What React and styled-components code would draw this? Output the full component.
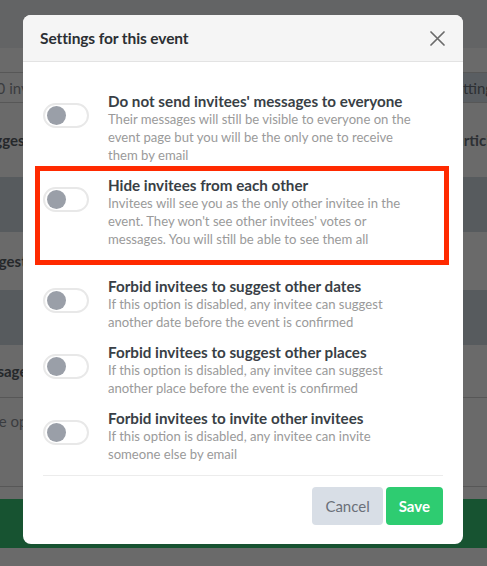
import React from "react";
import styled, { createGlobalStyle } from "styled-components";

const Global = createGlobalStyle`
  html, body { margin: 0; padding: 0; }
  body {
    width: 487px;
    height: 566px;
    overflow: hidden;
    background: #666666;
    font-family: Lato, "Liberation Sans", sans-serif;
  }
`;

const Stage = styled.div`
  position: relative;
  width: 487px;
  height: 566px;
  overflow: hidden;
`;

/* ---------- dimmed page behind the dialog ---------- */
const Backdrop = styled.div`
  display: flex;
  flex-direction: column;
  width: 100%;
  height: 100%;
  background: #6a6a6a;
`;

const TopBar = styled.div`
  height: 48px;
  background: #636465;
`;

const BgRow = styled.div`
  display: flex;
  align-items: ${(p) => p.$align || "center"};
  justify-content: space-between;
  height: ${(p) => p.$h}px;
  box-sizing: border-box;
  background: ${(p) => (p.$dark ? "#575b5e" : "transparent")};
  border-bottom: ${(p) => (p.$line ? "1px solid #575757" : "none")};
  padding-top: ${(p) => p.$pt || 0}px;
  font-size: 15px;
  color: #2f3134;
  white-space: nowrap;
`;

const BgLeft = styled.div`
  width: ${(p) => p.$w || 60}px;
  overflow: hidden;
  display: flex;
  justify-content: flex-end;
  font-weight: ${(p) => (p.$bold ? 700 : 400)};
  color: ${(p) => (p.$bold ? "#25282b" : "#3a3c3f")};
`;

const BgRight = styled.div`
  display: flex;
  align-items: center;
  height: 100%;
  padding-left: 16px;
  width: 40px;
  overflow: hidden;
  background: ${(p) => (p.$box ? "#5a5e62" : "transparent")};
  font-weight: ${(p) => (p.$bold ? 700 : 400)};
  color: #2c2f33;
`;

const Green = styled.div`
  height: 49px;
  margin-top: 12px;
  background: #175331;
`;

/* ---------- dialog ---------- */
const Dialog = styled.div`
  position: absolute;
  left: 23px;
  top: 15px;
  width: 440px;
  background: #ffffff;
  border-radius: 8px;
  overflow: hidden;
  display: flex;
  flex-direction: column;
`;

const Header = styled.div`
  height: 47px;
  box-sizing: border-box;
  display: flex;
  align-items: center;
  justify-content: space-between;
  padding: 0 18px 0 17px;
  background: #f5f5f5;
  border-bottom: 1px solid #e3e3e3;
`;

const Title = styled.h2`
  margin: 0;
  font-size: 15.5px;
  font-weight: 700;
  color: #2b2f33;
  letter-spacing: -0.1px;
`;

const CloseButton = styled.button`
  border: 0;
  background: none;
  padding: 0;
  width: 16px;
  height: 16px;
  display: flex;
  align-items: center;
  justify-content: center;
  cursor: pointer;
`;

const Body = styled.div`
  display: flex;
  flex-direction: column;
  gap: 12px;
  padding: 30px 20px 0 20px;
`;

const Option = styled.div`
  display: flex;
  align-items: flex-start;
  gap: 19px;
`;

const Highlight = styled.div`
  margin: -10px -6px 0 -8px;
  padding: 5px 1px 12px 3px;
  border: 5px solid #ff2a00;
`;

const Toggle = styled.span`
  flex: none;
  margin-top: 11px;
  width: 46px;
  height: 25px;
  box-sizing: border-box;
  border: 2px solid #e8e8e8;
  border-radius: 13px;
  background: #fff;
  display: flex;
  align-items: center;
  padding-left: 2px;
`;

const Knob = styled.span`
  width: 19px;
  height: 19px;
  border-radius: 50%;
  background: #9a9fa8;
`;

const Texts = styled.div`
  display: flex;
  flex-direction: column;
`;

const OptionTitle = styled.div`
  font-size: 15.2px;
  line-height: 18px;
  font-weight: 700;
  color: #393f46;
`;

const OptionDesc = styled.div`
  font-size: 13.1px;
  line-height: 18px;
  color: #9a9a9a;
  max-width: 312px;
`;

const Footer = styled.div`
  margin: 12px 20px 0;
  padding: 11px 0 19px;
  border-top: 1px solid #ececec;
  display: flex;
  justify-content: flex-end;
  gap: 3px;
`;

const Button = styled.button`
  height: 38px;
  border: 0;
  border-radius: 4px;
  padding: 0 13px;
  font-family: inherit;
  font-size: 15px;
  font-weight: ${(p) => (p.$primary ? 700 : 400)};
  background: ${(p) => (p.$primary ? "#2ecc71" : "#d8dee6")};
  color: ${(p) => (p.$primary ? "#ffffff" : "#6b7079")};
  cursor: pointer;
`;

const options = [
  {
    title: "Do not send invitees' messages to everyone",
    desc: "Their messages will still be visible to everyone on the event page but you will be the only one to receive them by email",
  },
  {
    title: "Hide invitees from each other",
    desc: "Invitees will see you as the only other invitee in the event. They won't see other invitees' votes or messages. You will still be able to see them all",
    highlight: true,
  },
  {
    title: "Forbid invitees to suggest other dates",
    desc: "If this option is disabled, any invitee can suggest another date before the event is confirmed",
  },
  {
    title: "Forbid invitees to suggest other places",
    desc: "If this option is disabled, any invitee can suggest another place before the event is confirmed",
  },
  {
    title: "Forbid invitees to invite other invitees",
    desc: "If this option is disabled, any invitee can invite someone else by email",
  },
];

function OptionRow({ title, desc }) {
  return (
    <Option>
      <Toggle role="switch" aria-checked="false">
        <Knob />
      </Toggle>
      <Texts>
        <OptionTitle>{title}</OptionTitle>
        <OptionDesc>{desc}</OptionDesc>
      </Texts>
    </Option>
  );
}

export default function App() {
  return (
    <Stage>
      <Global />
      <Backdrop>
        <TopBar />
        <BgRow $h={25} $line />
        <BgRow $h={30} $line>
          <BgLeft $w={60}>&nbsp;0 invitees</BgLeft>
          <BgRight $box>Settings</BgRight>
        </BgRow>
        <BgRow $h={74}>
          <BgLeft $w={70} $bold>Suggest dates</BgLeft>
          <BgRight $bold>Participants</BgRight>
        </BgRow>
        <BgRow $h={55} $dark />
        <BgRow $h={58}>
          <BgLeft $w={72} $bold>Suggest places</BgLeft>
        </BgRow>
        <BgRow $h={55} $dark />
        <BgRow $h={53} $line>
          <BgLeft $w={34} $bold>Hide messages</BgLeft>
        </BgRow>
        <BgRow $h={89} $line $align="flex-start" $pt={14}>
          <BgLeft $w={60}>More options</BgLeft>
        </BgRow>
        <Green />
      </Backdrop>

      <Dialog role="dialog" aria-label="Settings for this event">
        <Header>
          <Title>Settings for this event</Title>
          <CloseButton aria-label="Close">
            <svg width="15" height="15" viewBox="0 0 15 15">
              <path d="M1 1 L14 14 M14 1 L1 14" stroke="#6b6b6b" strokeWidth="1.7" strokeLinecap="round" />
            </svg>
          </CloseButton>
        </Header>
        <Body>
          {options.map((o) =>
            o.highlight ? (
              <Highlight key={o.title}>
                <OptionRow {...o} />
              </Highlight>
            ) : (
              <OptionRow key={o.title} {...o} />
            )
          )}
        </Body>
        <Footer>
          <Button>Cancel</Button>
          <Button $primary>Save</Button>
        </Footer>
      </Dialog>
    </Stage>
  );
}
